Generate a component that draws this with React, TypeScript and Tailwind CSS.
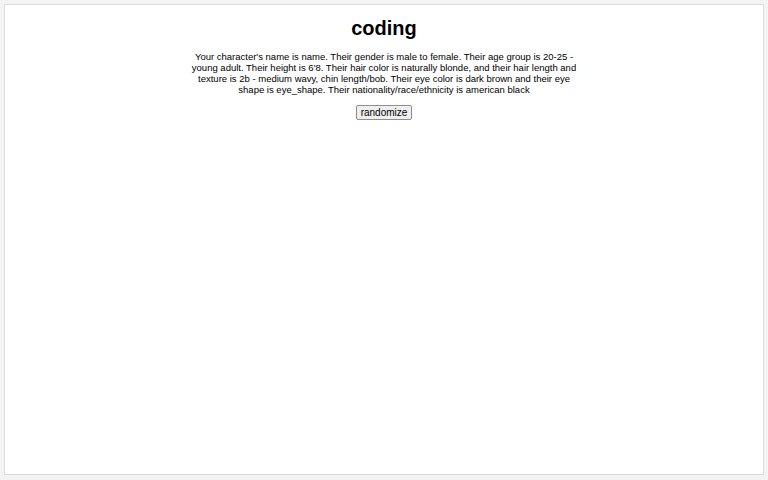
export default function App() {
  return (
    <div className="h-[480px] w-[768px] bg-[#f3f3f3] p-[4px] font-['Liberation_Sans',Arial,sans-serif]">
      <div className="flex h-[471px] flex-col items-center border border-[#dcdcdc] bg-white pt-[10px]">
        <h1 className="text-[20px] font-bold leading-[26px] text-black">coding</h1>
        <p className="mt-[10px] w-[392px] text-center text-[9.5px] leading-[11px] text-black">
          Your character's name is name. Their gender is male to female. Their age group is 20-25 - young
          adult. Their height is 6'8. Their hair color is naturally blonde, and their hair length and
          texture is 2b - medium wavy, chin length/bob. Their eye color is dark brown and their eye shape
          is eye_shape. Their nationality/race/ethnicity is american black
        </p>
        <button className="mt-[10px] rounded-[2px] border border-[#8f8f8f] bg-[#efefef] px-[4px] py-[1px] text-[10px] leading-[11px] text-black">
          randomize
        </button>
      </div>
    </div>
  );
}
